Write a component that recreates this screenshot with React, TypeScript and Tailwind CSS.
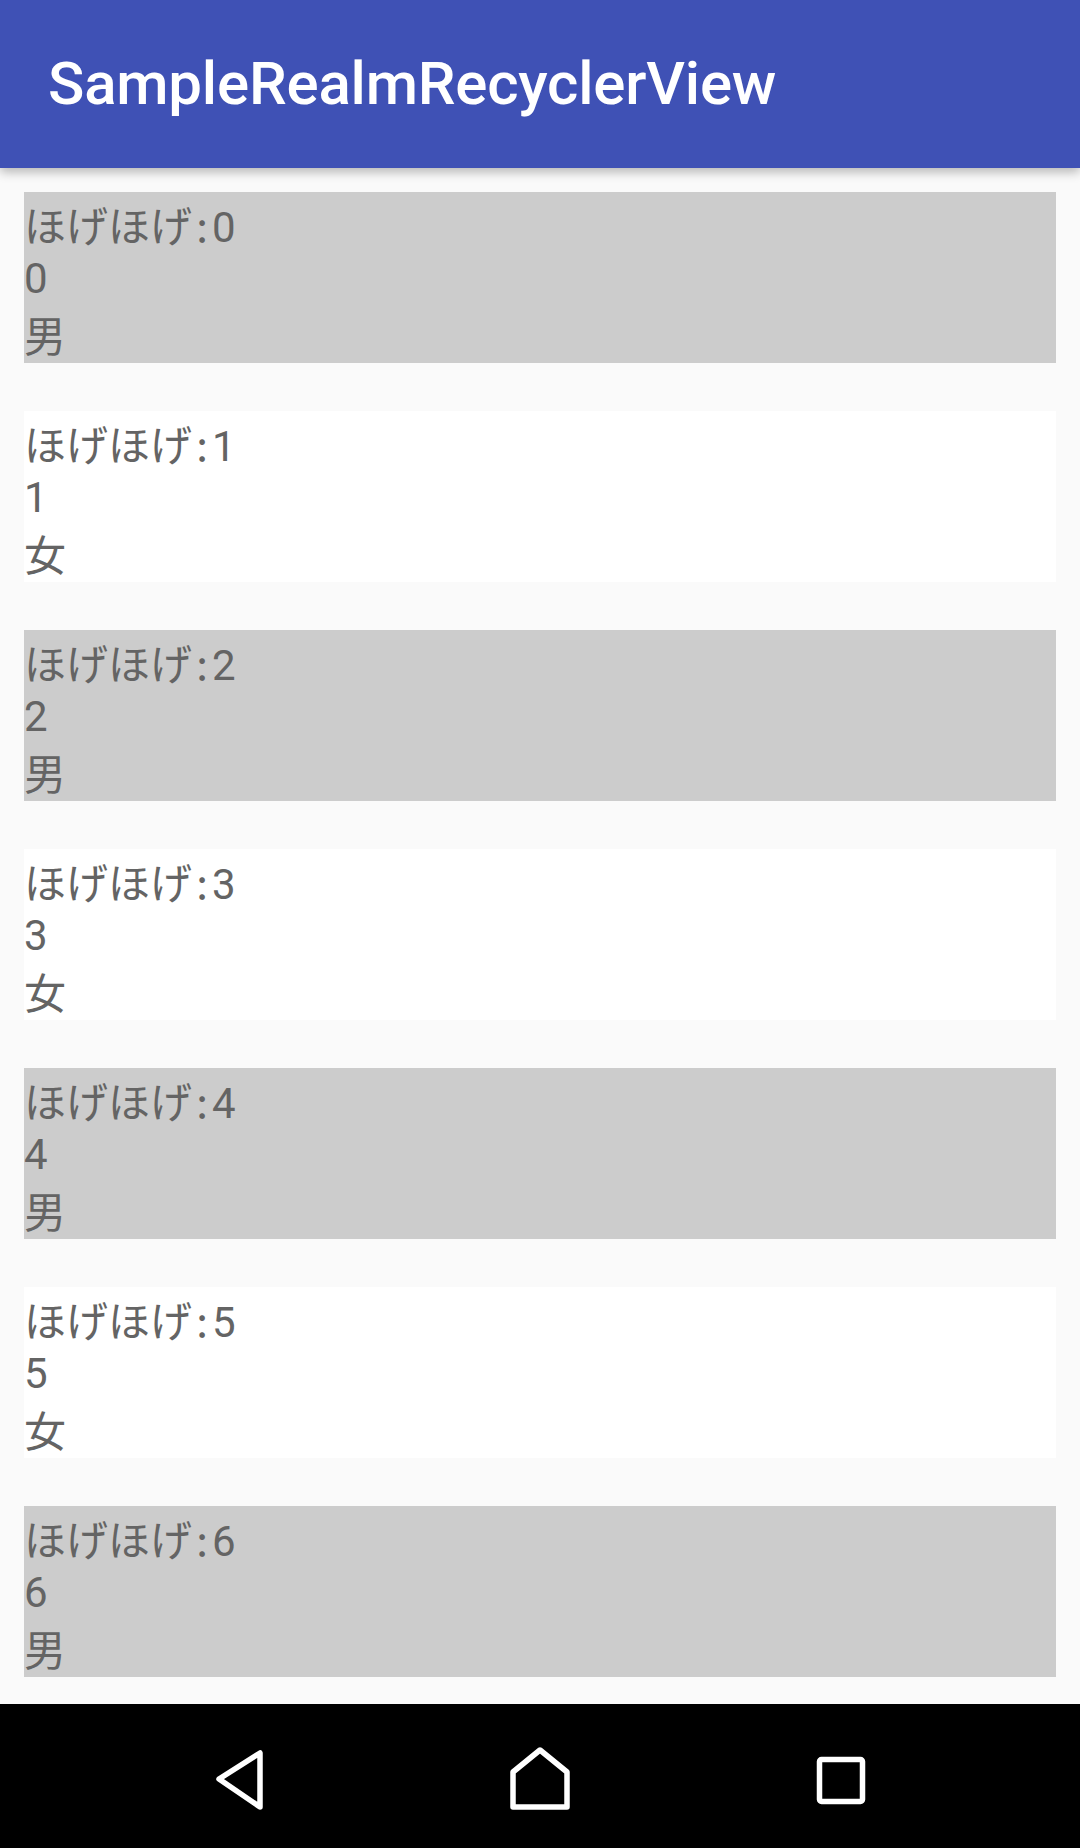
const items = Array.from({ length: 7 }, (_, i) => ({
  id: i,
  age: `${i}`,
  sex: i % 2 === 0 ? '男' : '女',
}))

const BackIcon = () => (
  <svg width="60" height="64" viewBox="0 0 60 64" fill="none">
    <path
      d="M50 5 L50 59 L9 31 Z"
      stroke="white"
      strokeWidth="5.5"
      strokeLinejoin="round"
    />
  </svg>
)

const HomeIcon = () => (
  <svg width="64" height="64" viewBox="0 0 64 64" fill="none">
    <path
      d="M32 3 L59 25 L59 60 L5 60 L5 25 Z"
      stroke="white"
      strokeWidth="5.5"
      strokeLinejoin="round"
    />
  </svg>
)

const RecentIcon = () => (
  <svg width="56" height="56" viewBox="0 0 56 56" fill="none">
    <rect x="6.5" y="6.5" width="43" height="42" rx="2" stroke="white" strokeWidth="5.5" />
  </svg>
)

const App = () => {
  return (
    <div
      className="w-[1080px] h-[1848px] flex flex-col bg-[#fafafa] overflow-hidden"
      style={{ fontFamily: 'Roboto, "Noto Sans CJK JP", sans-serif' }}
    >
      {/* App bar */}
      <header className="relative z-10 h-[168px] shrink-0 bg-[#3f51b5] flex items-center pl-[48px] shadow-[0_4px_10px_rgba(0,0,0,0.28)]">
        <h1 className="text-[60px] font-medium text-white leading-none tracking-[-0.2px]">
          SampleRealmRecyclerView
        </h1>
      </header>

      {/* List */}
      <main className="flex-1 flex flex-col px-[24px] pt-[24px] gap-[48px]">
        {items.map((item) => (
          <div
            key={item.id}
            className={`h-[171px] flex flex-col pt-[4px] text-[42px] leading-[55px] text-[#646464] ${
              item.id % 2 === 0 ? 'bg-[#cccccc]' : 'bg-white'
            }`}
          >
            <div className="h-[55px] whitespace-nowrap">
              <span className="font-['Noto_Sans_CJK_JP',sans-serif]">ほげほげ</span>
              <span className="inline-block w-[20px] text-center font-['Noto_Sans_CJK_JP',sans-serif]">:</span>
              {item.id}
            </div>
            <div className="h-[55px]">{item.age}</div>
            <div className="h-[55px] font-['Noto_Sans_CJK_JP',sans-serif]">{item.sex}</div>
          </div>
        ))}
      </main>

      {/* Navigation bar */}
      <nav className="h-[144px] shrink-0 bg-black flex items-center">
        <div className="absolute left-[210px] top-[1748px]">
          <BackIcon />
        </div>
        <div className="absolute left-[508px] top-[1747px]">
          <HomeIcon />
        </div>
        <div className="absolute left-[813px] top-[1753px]">
          <RecentIcon />
        </div>
      </nav>
    </div>
  )
}

export default App
